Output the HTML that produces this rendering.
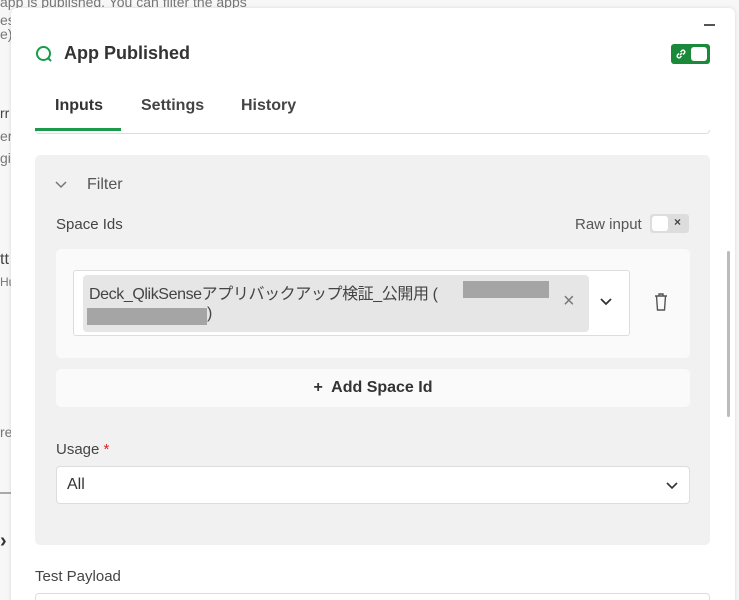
<!DOCTYPE html>
<html><head><meta charset="utf-8"><style>
*{box-sizing:border-box;margin:0;padding:0}
html,body{width:739px;height:600px;overflow:hidden}
body{background:#f7f7f7;font-family:"Liberation Sans","Noto Sans CJK JP",sans-serif;color:#333;position:relative}
.abs{position:absolute}
.bg{font-size:14px;color:#777;white-space:nowrap}
.panel{left:11px;top:8px;width:724px;height:600px;background:#fff;border-radius:6px;box-shadow:0 0 4px rgba(0,0,0,.12)}
</style></head><body>
<div class="abs bg" style="left:0;top:-6px">app is published. You can filter the apps</div>
<div class="abs bg" style="left:0;top:12px">es</div>
<div class="abs bg" style="left:0;top:26px">e)</div>
<div class="abs bg" style="left:0;top:105px;color:#444">rr</div>
<div class="abs bg" style="left:0;top:128px">er</div>
<div class="abs bg" style="left:0;top:150px">gi</div>
<div class="abs bg" style="left:0;top:251px;font-size:16px;color:#444">tt</div>
<div class="abs bg" style="left:0;top:275px;font-size:12px">Hu</div>
<div class="abs bg" style="left:0;top:424px">re</div>
<div class="abs" style="left:0;top:492px;width:11px;height:2px;background:#aaa"></div>
<div class="abs" style="left:0;top:530px;font-size:20px;color:#333;font-weight:bold">›</div>

<div class="abs panel">
 <div class="abs" style="left:693px;top:16px;width:11px;height:2px;background:#555"></div>
 <svg class="abs" style="left:24px;top:37px" width="18" height="18" viewBox="0 0 18 18"><circle cx="8.5" cy="8.5" r="6.5" fill="none" stroke="#1a9a4a" stroke-width="2"/><path d="M13 13l3 3" stroke="#1a9a4a" stroke-width="2"/></svg>
 <div class="abs" style="left:53px;top:35px;font-size:18px;font-weight:bold;color:#333">App Published</div>
 <div class="abs" style="left:660px;top:36px;width:39px;height:20px;background:#1a8a3a;border-radius:3px">
  <svg class="abs" style="left:4px;top:4px" width="12" height="12" viewBox="0 0 12 12"><path d="M5 7l2-2M4 5.5L2.5 7a1.8 1.8 0 0 0 2.5 2.5L6.5 8M8 6.5L9.5 5A1.8 1.8 0 0 0 7 2.5L5.5 4" stroke="#fff" stroke-width="1.4" fill="none"/></svg>
  <div class="abs" style="left:20px;top:3px;width:16px;height:14px;background:#fff;border-radius:3px"></div>
 </div>
 <div class="abs" style="left:44px;top:89px;font-size:16px;font-weight:bold;color:#333">Inputs</div>
 <div class="abs" style="left:130px;top:89px;font-size:16px;font-weight:bold;color:#444">Settings</div>
 <div class="abs" style="left:230px;top:89px;font-size:16px;font-weight:bold;color:#444">History</div>
 <div class="abs" style="left:24px;top:122px;width:675px;height:4px;border:1px solid #ddd;border-top:none;border-radius:0 0 4px 4px"></div>
 <div class="abs" style="left:24px;top:120px;width:86px;height:3px;background:#1a9a4a"></div>

 <div class="abs" style="left:24px;top:147px;width:675px;height:390px;background:#f1f1f1;border-radius:5px">
  <svg class="abs" style="left:20px;top:26px" width="12" height="8" viewBox="0 0 12 8"><path d="M1 1l5 5 5-5" stroke="#777" stroke-width="1.5" fill="none"/></svg>
  <div class="abs" style="left:52px;top:21px;font-size:16px;color:#555">Filter</div>
  <div class="abs" style="left:21px;top:61px;font-size:15px;color:#444">Space Ids</div>
  <div class="abs" style="left:540px;top:61px;font-size:15px;color:#555">Raw input</div>
  <div class="abs" style="left:615px;top:59px;width:39px;height:19px;background:#ddd;border-radius:3px">
   <div class="abs" style="left:2px;top:2px;width:16px;height:15px;background:#fff;border-radius:3px"></div>
   <div class="abs" style="left:24px;top:1px;font-size:12px;font-weight:bold;color:#444">×</div>
  </div>
  <div class="abs" style="left:21px;top:94px;width:634px;height:109px;background:#fafafa;border-radius:5px">
   <div class="abs" style="left:17px;top:21px;width:557px;height:66px;background:#fff;border:1px solid #ddd;border-radius:3px">
    <div class="abs" style="left:9px;top:4px;width:506px;height:57px;background:#e6e6e6;border-radius:4px">
     <div class="abs" style="left:6px;top:5px;font-size:16px;color:#444;white-space:nowrap;letter-spacing:-0.4px">Deck_QlikSenseアプリバックアップ検証_公開用 (</div>
     <div class="abs" style="left:380px;top:6px;width:86px;height:17px;background:#a5a5a5"></div>
     <div class="abs" style="left:4px;top:33px;width:120px;height:17px;background:#a5a5a5"></div>
     <div class="abs" style="left:124px;top:30px;font-size:16px;color:#444">)</div>
     <div class="abs" style="left:480px;top:15px;font-size:20px;color:#777">×</div>
    </div>
    <svg class="abs" style="left:526px;top:27px" width="12" height="8" viewBox="0 0 12 8"><path d="M1 1l5 5 5-5" stroke="#333" stroke-width="1.8" fill="none"/></svg>
   </div>
   <svg class="abs" style="left:598px;top:44px" width="14" height="18" viewBox="0 0 14 18"><path d="M1 3h12M5 3V1h4v2M2.5 3l1 14h7l1-14" stroke="#555" stroke-width="1.4" fill="none"/></svg>
  </div>
  <div class="abs" style="left:21px;top:214px;width:634px;height:38px;background:#fafafa;border-radius:5px;text-align:center;font-size:16px;font-weight:bold;color:#333;line-height:38px">+&nbsp; Add Space Id</div>
  <div class="abs" style="left:21px;top:286px;font-size:15px;color:#444">Usage <span style="color:#d22">*</span></div>
  <div class="abs" style="left:21px;top:311px;width:634px;height:38px;background:#fff;border:1px solid #ddd;border-radius:4px">
   <div class="abs" style="left:10px;top:9px;font-size:16px;color:#333">All</div>
   <svg class="abs" style="left:609px;top:15px" width="12" height="8" viewBox="0 0 12 8"><path d="M1 1l5 5 5-5" stroke="#333" stroke-width="1.6" fill="none"/></svg>
  </div>
 </div>
 <div class="abs" style="left:24px;top:560px;font-size:15px;color:#444">Test Payload</div>
 <div class="abs" style="left:24px;top:585px;width:675px;height:30px;border:1px solid #ddd;border-radius:4px"></div>
 <div class="abs" style="left:716px;top:243px;width:3px;height:166px;background:#bbb;border-radius:2px"></div>
</div>
</body></html>
